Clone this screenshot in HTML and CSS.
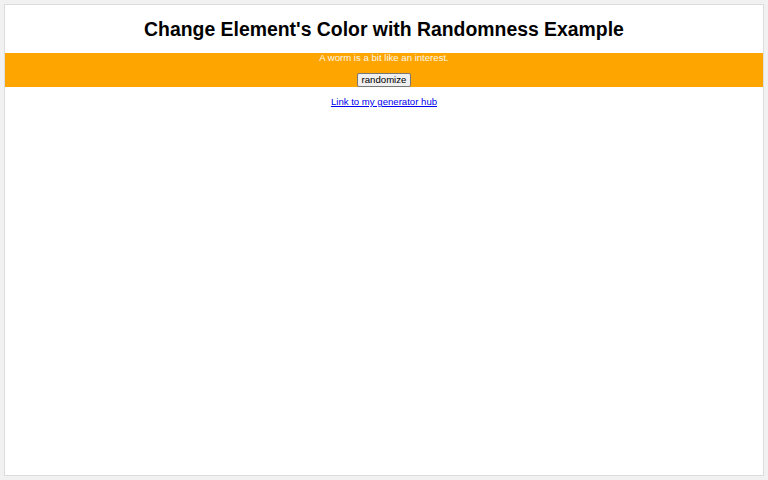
FILE: index.html
```html
<!DOCTYPE html>
<html>
<head>
<meta charset="utf-8">
<link rel="stylesheet" href="styles.css">
</head>
<body>
<div class="page">
  <h1 class="title">Change Element's Color with Randomness Example</h1>
  <div class="band">
    <p class="phrase">A worm is a bit like an interest.</p>
    <button class="btn">randomize</button>
  </div>
  <p class="hub"><a href="#">Link to my generator hub</a></p>
</div>
</body>
</html>
```
FILE: styles.css
```css
html, body { margin: 0; padding: 0; }
body {
  background: #f1f1f1;
  font-family: "Liberation Sans", Arial, sans-serif;
  width: 768px;
  height: 480px;
  padding: 4px;
  box-sizing: border-box;
}
.page {
  background: #fff;
  border: 1px solid #dcdcdc;
  height: 472px;
  box-sizing: border-box;
  text-align: center;
}
.title {
  margin: 0;
  padding: 13px 0 0;
  height: 48px;
  box-sizing: border-box;
  font-size: 19.4px;
  line-height: 22px;
  font-weight: bold;
  color: #000;
}
.band {
  background: #ffa500;
  height: 34px;
  box-sizing: border-box;
}
.phrase {
  margin: 0;
  color: #fff7e8;
  font-size: 9.6px;
  line-height: 10px;
}
.btn {
  display: block;
  margin: 10px auto 0;
  font-family: "Liberation Sans", Arial, sans-serif;
  font-size: 9.6px;
  padding: 1px 4px;
  height: 14px;
  line-height: 10px;
  background: #efefef;
  border: 1px solid #767676;
  border-radius: 2px;
  color: #000;
}
.hub {
  margin: 9px 0 0;
  font-size: 9.6px;
  line-height: 12px;
}
.hub a { color: #0000ee; }
```
